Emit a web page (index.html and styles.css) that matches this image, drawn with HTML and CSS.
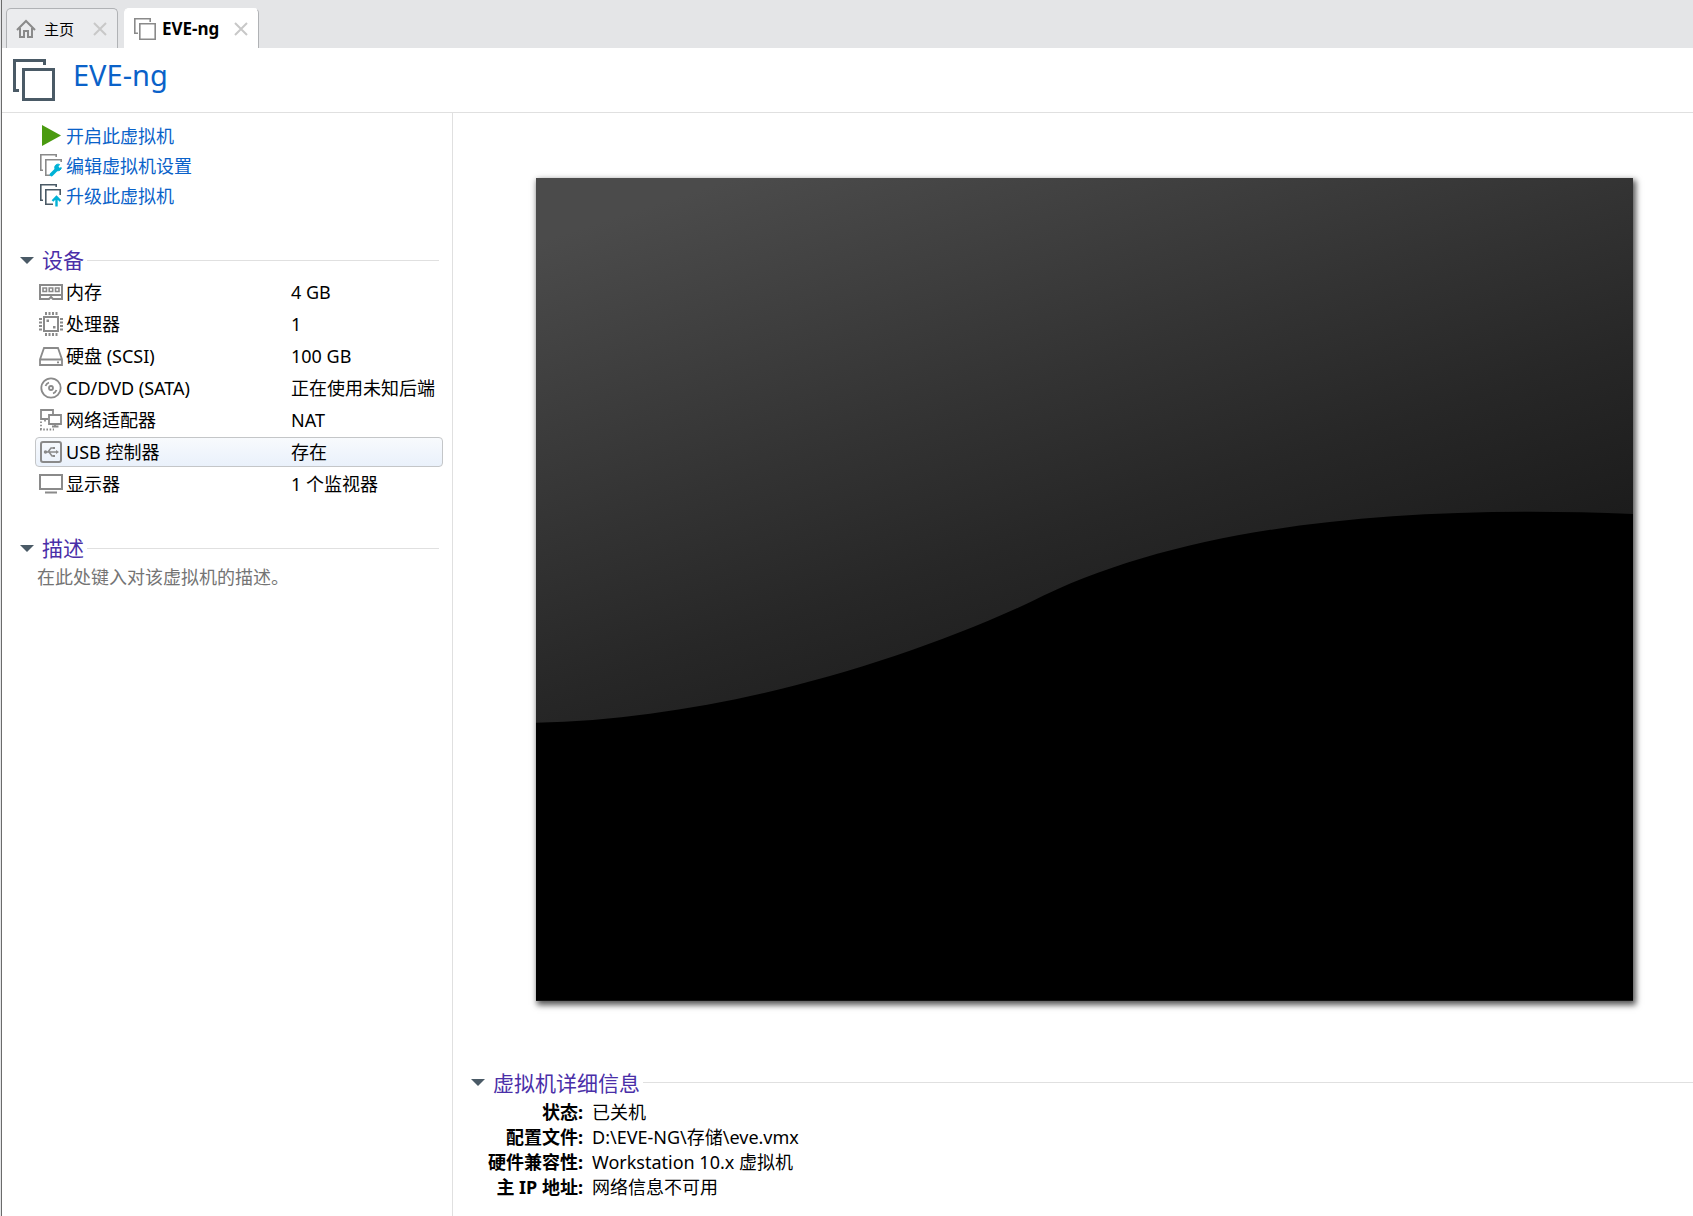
FILE: index.html
```html
<!DOCTYPE html>
<html lang="zh-CN">
<head>
    <meta charset="UTF-8">
    <meta name="viewport" content="width=device-width, initial-scale=1.0">
    <title>EVE-ng</title>
    <link rel="stylesheet" href="styles.css">
</head>
<body>
    <div id="container">

        <nav class="tabs">
            <div class="tab">
                <svg width="20" height="20" viewBox="0 0 20 20" fill="none" stroke="#8a8a8a" stroke-width="2"><path d="M1 11L10 2l9 9M4 9v9h4v-6h4v6h4V9"/></svg>
                <button class="tabName">主页</button>
                <button class="tabClose" aria-label="关闭主页"><svg width="14" height="14" viewBox="0 0 14 14" stroke="#c8c8c8" stroke-width="2"><path d="M1 1l12 12M13 1L1 13"/></svg></button>
            </div>
            <div class="tab active">
                <svg width="22" height="22" viewBox="0 0 22 22" fill="none" stroke="#8a8a8a" stroke-width="1.6"><path d="M4 15.2H.8V.8h15.4V4M5.8 5.8h15.4v15.4H5.8z"/></svg>
                <button class="tabName">EVE-ng</button>
                <button class="tabClose" aria-label="关闭 EVE-ng"><svg width="14" height="14" viewBox="0 0 14 14" stroke="#c8c8c8" stroke-width="2"><path d="M1 1l12 12M13 1L1 13"/></svg></button>
            </div>
        </nav>

        <header>
            <svg width="42" height="42" viewBox="0 0 42 42" fill="none" stroke="#4a5a66" stroke-width="3"><path d="M6 31.5H1.500v-30h30V6M10.500 10.500h30v30h-30z"/></svg>
            <h1>EVE-ng</h1>
        </header>

        <main>
            <section class="leftColumn">
                <ul class="actions">
                    <li><a href="#"><svg width="24" height="24" viewBox="0 0 24 24"><path d="M3 2v21l19-10.500z" fill="#4a9a10"/></svg>开启此虚拟机</a></li>
                    <li><a href="#"><svg width="24" height="24" viewBox="0 0 24 24" fill="none" stroke="#8a8a8a" stroke-width="1.6"><path d="M4 17.200H1.800V1.800h15.400V4M11 22.200H6.800V6.800h15.400V9"/><path d="M12.500 21.500l6-6" stroke="#00b2d6" stroke-width="3.600" stroke-linecap="round"/><path d="M20.500 11.500a3.300 3.300 0 1 0 1.800 3.200l-2.300.6-1.200-1.300z" fill="#00b2d6" stroke="#00b2d6" stroke-width="1"/></svg>编辑虚拟机设置</a></li>
                    <li><a href="#"><svg width="24" height="24" viewBox="0 0 24 24" fill="none" stroke="#4a5a66" stroke-width="1.6"><path d="M4 17.200H1.800V1.800h15.400V4M14 21.200H6.800V6.800h14.400V12"/><path d="M17.500 23.500v-9M13.500 18l4-4 4 4" stroke="#00b2d6" stroke-width="2.400"/></svg>升级此虚拟机</a></li>
                </ul>

                <h2><button>设备</button></h2>
                <div class="devices">
                    <button><svg width="24" height="24" viewBox="0 0 24 24" fill="none" stroke="#8a8a8a" stroke-width="2"><path d="M1 5h22v14h-9l-2-2-2 2H1zM1 15h22"/><path d="M4 8h3.500v3.500H4zM10.200 8h3.500v3.500h-3.500zM16.500 8H20v3.500h-3.500z" stroke-width="1.600"/></svg><span>内存</span><span>4 GB</span></button>
                    <button><svg width="24" height="24" viewBox="0 0 24 24" fill="none" stroke="#8a8a8a" stroke-width="2"><path d="M5 5h14v14H5z"/><path d="M6 1.500h13M6 22.500h13" stroke-width="3" stroke-dasharray="2 1.500"/><path d="M1.500 6v13M22.500 6v13" stroke-width="3" stroke-dasharray="2 1.500"/><path d="M7.500 7.500H10V10H7.500zM14 14h2.500v2.500H14z" fill="#8a8a8a" stroke="none"/></svg><span>处理器</span><span>1</span></button>
                    <button><svg width="24" height="24" viewBox="0 0 24 24" fill="none" stroke="#8a8a8a" stroke-width="1.8"><path d="M5 4h14l4 11.500V21H1v-5.500zM1 15.500h22M18 18.300h2"/></svg><span>硬盘 (SCSI)</span><span>100 GB</span></button>
                    <button><svg width="24" height="24" viewBox="0 0 24 24" fill="none" stroke="#8a8a8a" stroke-width="1.8"><circle cx="12" cy="12" r="9.700"/><circle cx="12" cy="12" r="2"/><path d="M6.500 10a6 6 0 0 1 3.500-3.500M17.500 14a6 6 0 0 1-3.500 3.500"/></svg><span>CD/DVD (SATA)</span><span>正在使用未知后端</span></button>
                    <button><svg width="24" height="24" viewBox="0 0 24 24" fill="none" stroke="#8a8a8a" stroke-width="1.8"><path d="M9 11H2V2h12v4M10 7h12v9H10zM16 16v3M13 18.500h6.500M6 11v2.500"/><path d="M2 13.500V22M1 21.500h14" stroke-dasharray="1.600 1.600"/></svg><span>网络适配器</span><span>NAT</span></button>
                    <button class="selected"><svg width="24" height="24" viewBox="0 0 24 24" fill="none" stroke="#8a8a8a" stroke-width="1.5"><rect x="2" y="2" width="20" height="20" rx="2" stroke-width="2"/><path d="M6 12h12M9 12l3-4h3M10 12l3 4h2"/><circle cx="6.500" cy="12" r="1" fill="#8a8a8a"/><path d="M17 10l3 2-3 2zM14 7h2v2h-2zM14 15h2v2h-2z" fill="#8a8a8a" stroke="none"/></svg><span>USB 控制器</span><span>存在</span></button>
                    <button><svg width="24" height="24" viewBox="0 0 24 24" fill="none" stroke="#8a8a8a" stroke-width="2"><path d="M1 3h22v14H1zM6 20.500h12"/></svg><span>显示器</span><span>1 个监视器</span></button>
                </div>

                <h2><button>描述</button></h2>
                <textarea class="description" aria-label="描述" placeholder="在此处键入对该虚拟机的描述。"></textarea>
            </section>

            <section class="rightColumn">
                <svg class="screen" viewBox="0 0 1097 823" preserveAspectRatio="none">
                    <defs>
                        <linearGradient id="shade" gradientUnits="userSpaceOnUse" x1="200" y1="0" x2="390" y2="590">
                            <stop offset="0" stop-color="#4b4b4b"/>
                            <stop offset="0.46" stop-color="#333"/>
                            <stop offset="0.7" stop-color="#272727"/>
                            <stop offset="1" stop-color="#1a1a1a"/>
                        </linearGradient>
                    </defs>
                    <rect width="1097" height="823" fill="url(#shade)"/>
                    <path d="M0 545C170 541 350 491 495 424C640 350 850 326 1097 336V823H0z" fill="#000"/>
                </svg>

                <h2><button>虚拟机详细信息</button></h2>
                <dl>
                    <dt>状态:</dt><dd>已关机</dd>
                    <dt>配置文件:</dt><dd>D:\EVE-NG\存储\eve.vmx</dd>
                    <dt>硬件兼容性:</dt><dd>Workstation 10.x 虚拟机</dd>
                    <dt>主 IP 地址:</dt><dd>网络信息不可用</dd>
                </dl>
            </section>
        </main>

    </div>
</body>
</html>
```

FILE: styles.css
```css
* {
    box-sizing: border-box;
}
body {
    margin:0;
    background-color:#e4e5e7;
    font-family:"Noto Sans", "Noto Sans CJK SC", sans-serif;
    font-size:18px;
    color:#000;
}
button {
    padding:0;
    border:none;
    background:none;
    font:inherit;
    color:inherit;
    text-align:left;
}
svg {
    display:block;
    flex-shrink:0;
}
#container {
    display:flex;
    flex-direction:column;
    min-height:100vh;
    margin-left:1px;
    border-left:1px solid #6b6b6b;
    background-color:#fff;
}

/* tabs */
.tabs {
    display:flex;
    gap:6px;
    height:48px;
    padding:8px 0 0 4px;
    background-color:#e4e5e7;
}
.tab {
    display:flex;
    align-items:center;
    padding:0 10px 0 9px;
    border:1px solid #b0b2b5;
    border-bottom:none;
    border-radius:5px 5px 0 0;
    background-color:#ebecee;
    font-size:15px;
}
.tabName {
    margin:0 19px 0 8px;
}
.active {
    border-color:#fff #b0b2b5 #fff #fff;
    background-color:#fff;
}
.active .tabName {
    margin:0 15px 0 6px;
    font-size:17px;
    font-weight:bold;
}

header {
    display:flex;
    align-items:center;
    gap:18px;
    height:65px;
    padding-left:11px;
    border-bottom:1px solid #e0e0e0;
}
h1 {
    margin:0 0 10px;
    font-size:29px;
    line-height:36px;
    font-weight:normal;
    color:#0a62c9;
}

main {
    display:flex;
    flex:1;
}
.leftColumn {
    width:451px;
    flex-shrink:0;
    padding:7px 13px 0 0;
    border-right:1px solid #e0e0e0;
}
.rightColumn {
    flex:1;
}

/* section headings */
h2 {
    display:flex;
    align-items:center;
    gap:3px;
    height:30px;
    margin:35px 0 2px;
    padding-left:18px;
    font-size:21px;
    font-weight:normal;
    color:#4a2fa8;
}
h2::after {
    content:"";
    flex:1;
    height:1px;
    background-color:#e0e0e0;
}
h2 button {
    display:flex;
    align-items:center;
    gap:8px;
    line-height:30px;
}
h2 button::before {
    content:"";
    border:7px solid transparent;
    border-top-color:#4a5a66;
    border-bottom:none;
}

.actions {
    margin:0;
    padding:0 0 0 37px;
    list-style:none;
}
.actions a {
    display:flex;
    align-items:center;
    gap:3px;
    height:30px;
    color:#0a62c9;
    text-decoration:none;
}

.devices {
    display:flex;
    flex-direction:column;
    gap:2px;
    margin:0 -4px -1px 0;
    padding-left:33px;
}
.devices button {
    display:grid;
    grid-template-columns:24px 222px 1fr;
    column-gap:3px;
    align-items:center;
    height:30px;
    padding-left:3px;
    border:1px solid transparent;
    border-radius:4px;
    line-height:28px;
    white-space:nowrap;
}
.devices .selected {
    border-color:#c4c6c8;
    background:linear-gradient(#f8fafd, #eaf1fb);
}

.description {
    display:block;
    width:100%;
    height:100px;
    padding:0 0 0 35px;
    border:none;
    resize:none;
    background:none;
    font:inherit;
    line-height:24px;
}
.description::placeholder {
    color:#747474;
}

.screen {
    width:calc(100% - 143px);
    height:auto;
    aspect-ratio:4 / 3;
    margin:65px 60px 67px 83px;
    box-shadow:2px 3px 6px 1px #000a;
}
.rightColumn h2 {
    margin-top:0;
}
dl {
    display:grid;
    grid-template-columns:130px 1fr;
    column-gap:9px;
    margin:0;
    line-height:25px;
}
dt {
    font-weight:bold;
    text-align:right;
}
dd {
    margin:0;
}
```
